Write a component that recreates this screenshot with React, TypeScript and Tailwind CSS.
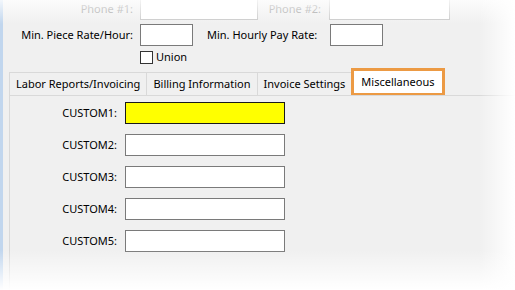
import React from "react";

const font = { fontFamily: "'Segoe UI', 'Noto Sans', Arial, sans-serif" };

function TextBox({ w, highlight }: { w: string; highlight?: boolean }) {
  return (
    <div
      className={
        highlight
          ? `${w} h-[22px] bg-[#ffff00] border border-[#1a1a1a]`
          : `${w} h-[22px] bg-white border border-[#7a7a7a]`
      }
    />
  );
}

const tabs = ["Labor Reports/Invoicing", "Billing Information", "Invoice Settings"];

export default function App() {
  return (
    <div
      className="relative w-[515px] h-[290px] overflow-hidden bg-[#f0f0f0] text-[11px] text-black flex"
      style={font}
    >
      {/* left window edge */}
      <div className="w-[3px] shrink-0 bg-[#c1d6ee]" />

      <div className="flex-1 flex flex-col">
        {/* phone row, cut off at the top */}
        <div className="flex items-center -mt-[2px] h-[22px]">
          <span className="w-[130px] text-right text-[#9a9a9a]">Phone #1:</span>
          <div className="ml-[7px] w-[118px] h-[21px] bg-white border border-[#c8c8c8]" />
          <span className="w-[63px] text-right text-[#9a9a9a]">Phone #2:</span>
          <div className="ml-[8px] w-[121px] h-[21px] bg-white border border-[#c8c8c8]" />
        </div>

        {/* rates */}
        <div className="flex items-center mt-[4px] h-[22px]">
          <span className="w-[130px] text-right">Min. Piece Rate/Hour:</span>
          <div className="ml-[7px]">
            <TextBox w="w-[53px]" />
          </div>
          <span className="ml-[14px] w-[122px]">Min. Hourly Pay Rate:</span>
          <div className="ml-[1px]">
            <TextBox w="w-[53px]" />
          </div>
        </div>

        {/* union */}
        <div className="flex items-center mt-[4px] ml-[137px] h-[14px] gap-[3px]">
          <div className="w-[13px] h-[13px] bg-white border border-[#333]" />
          <span>Union</span>
        </div>

        {/* tab strip */}
        <div className="flex items-end mt-[5px] ml-[6px] h-[26px]">
          {tabs.map((t) => (
            <div
              key={t}
              className="h-[23px] px-[6px] flex items-center border border-b-0 border-[#d9d9d9] -ml-px first:ml-0 bg-[#f0f0f0] whitespace-nowrap"
            >
              {t}
            </div>
          ))}
          <div className="h-[28px] -mb-[1px] -ml-[1px] px-[7px] flex items-center bg-white border-[3px] border-[#ec9a44] whitespace-nowrap">
            Miscellaneous
          </div>
        </div>

        {/* tab page */}
        <div className="ml-[6px] flex-1 border-t border-l border-[#d9d9d9] bg-[#f0f0f0] pt-[6px] flex flex-col gap-[10px]">
          {[1, 2, 3, 4, 5].map((n) => (
            <div key={n} className="flex items-center">
              <span className="w-[107px] text-right">CUSTOM{n}:</span>
              <div className="ml-[8px]">
                <TextBox w="w-[160px]" highlight={n === 1} />
              </div>
            </div>
          ))}
        </div>
      </div>

      {/* screenshot fade-outs */}
      <div className="pointer-events-none absolute left-0 right-0 top-0 h-[24px] bg-gradient-to-b from-white/80 to-transparent" />
      <div className="pointer-events-none absolute top-0 bottom-0 right-0 w-[36px] bg-gradient-to-l from-white to-transparent" />
      <div className="pointer-events-none absolute left-0 right-0 bottom-0 h-[40px] bg-gradient-to-t from-white to-transparent" />
    </div>
  );
}
